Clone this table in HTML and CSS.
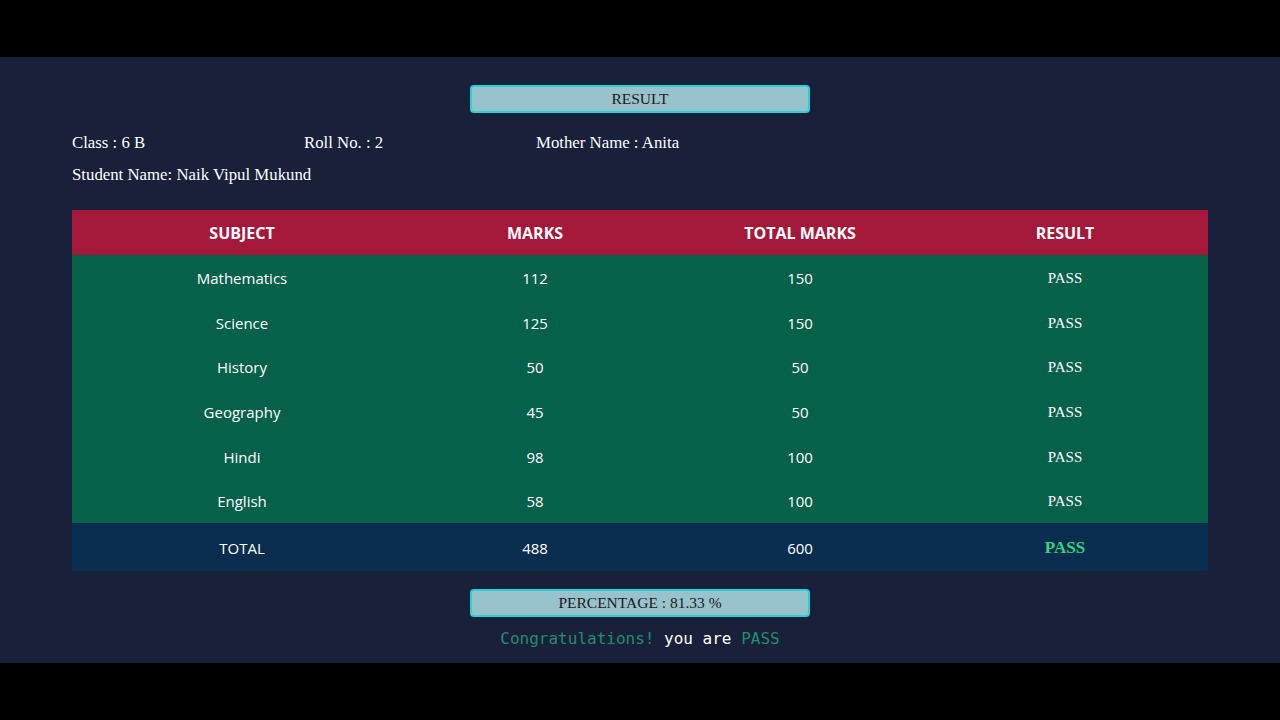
FILE: index.html
```html
<!DOCTYPE html>
<html>
<head>
<meta charset="utf-8">
<title>Result</title>
<link rel="stylesheet" href="styles.css">
</head>
<body>
<div class="frame">
  <main class="sheet">
    <div class="pill">RESULT</div>
    <div class="info">
      <div>Class : 6 B</div>
      <div>Roll No. : 2</div>
      <div>Mother Name : Anita</div>
      <div class="full">Student Name: Naik Vipul Mukund</div>
    </div>
    <table class="marks">
      <thead>
        <tr><th>SUBJECT</th><th>MARKS</th><th>TOTAL MARKS</th><th class="res">RESULT</th></tr>
      </thead>
      <tbody>
        <tr><td>Mathematics</td><td>112</td><td>150</td><td class="res">PASS</td></tr>
        <tr><td>Science</td><td>125</td><td>150</td><td class="res">PASS</td></tr>
        <tr><td>History</td><td>50</td><td>50</td><td class="res">PASS</td></tr>
        <tr><td>Geography</td><td>45</td><td>50</td><td class="res">PASS</td></tr>
        <tr><td>Hindi</td><td>98</td><td>100</td><td class="res">PASS</td></tr>
        <tr><td>English</td><td>58</td><td>100</td><td class="res">PASS</td></tr>
      </tbody>
      <tfoot>
        <tr><td>TOTAL</td><td>488</td><td>600</td><td class="res final">PASS</td></tr>
      </tfoot>
    </table>
    <div class="pill percent">PERCENTAGE : 81.33 %</div>
    <p class="congrats"><span class="green">Congratulations!</span> you are <span class="green">PASS</span></p>
  </main>
</div>
</body>
</html>
```
FILE: styles.css
```css
html, body {
  margin: 0;
  padding: 0;
  background: #000;
}
.frame {
  width: 1280px;
  height: 720px;
  padding-top: 57px;
  box-sizing: border-box;
}
.sheet {
  height: 606px;
  background: #18203a;
  box-sizing: border-box;
  padding: 28px 72px 0 72px;
  display: flex;
  flex-direction: column;
  align-items: center;
}
.pill {
  width: 340px;
  height: 28px;
  box-sizing: border-box;
  background: #98c3cc;
  border: 2px solid #2bd0d6;
  border-radius: 4px;
  color: #1a1a1a;
  font-family: "Liberation Serif", serif;
  font-size: 15.5px;
  display: flex;
  align-items: center;
  justify-content: center;
}
.info {
  align-self: stretch;
  display: grid;
  grid-template-columns: 232px 232px 1fr;
  row-gap: 14px;
  margin-top: 21px;
  color: #fff;
  font-family: "Liberation Serif", serif;
  font-size: 16.8px;
  line-height: 18px;
}
.info .full {
  grid-column: 1 / -1;
}
.marks {
  align-self: stretch;
  margin-top: 26px;
  border-collapse: collapse;
  table-layout: fixed;
  width: 1136px;
  font-family: "Open Sans", sans-serif;
  font-size: 15px;
  color: #fff;
}
.marks th, .marks td {
  text-align: center;
  padding: 0;
}
.marks th:nth-child(1) { width: 340px; }
.marks th:nth-child(2) { width: 246px; }
.marks th:nth-child(3) { width: 284px; }
.marks th:nth-child(4) { width: 246px; }
.marks .res { padding-right: 20px; }
.marks thead tr {
  background: #a5183a;
  height: 45px;
}
.marks th {
  font-weight: 700;
  font-size: 16px;
}
.marks tbody tr {
  background: #06614a;
  height: 44.7px;
}
.marks tbody td {
  padding-top: 1px;
}
.marks tbody td.res {
  font-family: "Liberation Serif", serif;
  font-size: 15px;
  padding-top: 2px;
}
.marks tfoot tr {
  background: #092d4f;
  height: 48px;
}
.marks tfoot td {
  padding-top: 1px;
}
.marks td.final {
  font-family: "Liberation Serif", serif;
  font-weight: 700;
  font-size: 17px;
  color: #2ed47a;
}
.pill.percent {
  margin-top: 18px;
}
.congrats {
  margin: 12px 0 0 0;
  font-family: "DejaVu Sans Mono", monospace;
  font-size: 16px;
  color: #fff;
}
.congrats .green {
  color: #1d8f6b;
}
```
